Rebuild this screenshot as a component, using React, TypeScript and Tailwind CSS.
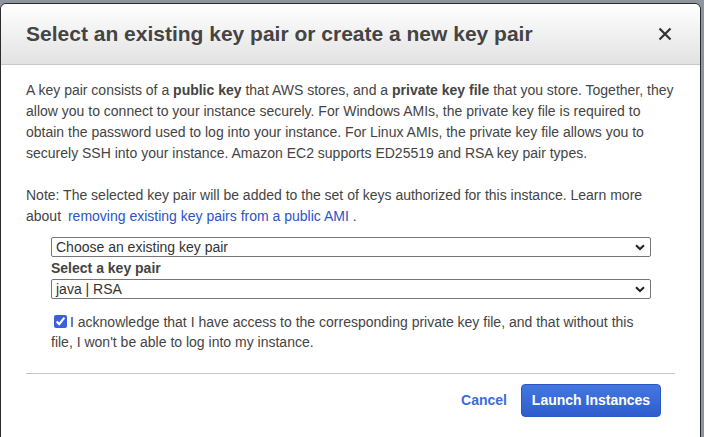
import React from "react";

function Chevron() {
  return (
    <svg width="10" height="7" viewBox="0 0 10 7" className="absolute right-[5px] top-[6px]">
      <path d="M1 1.2 L5 5 L9 1.2" fill="none" stroke="#222" strokeWidth="2" />
    </svg>
  );
}

function Select({ value }: { value: string }) {
  return (
    <div className="relative h-[20px] w-[600px] rounded-[2px] border border-[#767676] bg-white pl-[4px] text-[14px] leading-[18px] text-[#333]">
      {value}
      <Chevron />
    </div>
  );
}

export default function App() {
  return (
    <div
      className="h-[437px] w-[704px] overflow-hidden bg-[#8e959c] pt-[3px]"
      style={{ fontFamily: '"Liberation Sans", Arial, sans-serif' }}
    >
      <div className="h-[460px] w-[701px] rounded-t-[6px] border border-[#2b2b2b] bg-white">
        <div className="flex h-[61px] items-center justify-between rounded-t-[6px] border-b border-[#c8c8c8] bg-gradient-to-b from-[#ffffff] to-[#e2e2e2] pl-[25px] pr-[28px]">
          <div
            className="text-[21px] font-bold text-[#444]"
            style={{ fontFamily: '"Liberation Sans Narrow", "Arial Narrow", "Liberation Sans", sans-serif' }}
          >
            Select an existing key pair or create a new key pair
          </div>
          <svg width="14" height="14" viewBox="0 0 14 14">
            <path d="M1.5 1.5 L12.5 12.5 M12.5 1.5 L1.5 12.5" stroke="#333" strokeWidth="2.2" />
          </svg>
        </div>
        <div className="px-[25px] pt-[15px] text-[14px] leading-[21px] text-[#444]">
          <p>
            A key pair consists of a <b>public key</b> that AWS stores, and a <b>private key file</b> that you store. Together, they
            allow you to connect to your instance securely. For Windows AMIs, the private key file is required to obtain the
            password used to log into your instance. For Linux AMIs, the private key file allows you to securely SSH into your
            instance. Amazon EC2 supports ED25519 and RSA key pair types.
          </p>
          <p className="mt-[21px]">
            Note: The selected key pair will be added to the set of keys authorized for this instance. Learn more about{" "}
            <span className="ml-[3px] text-[#2d53c6]">removing existing key pairs from a public AMI</span> .
          </p>
          <div className="ml-[25px] mt-[10px] w-[600px]">
            <Select value="Choose an existing key pair" />
            <div className="mt-[1px] font-bold leading-[21px] text-[#444]">Select a key pair</div>
            <Select value="java | RSA" />
            <div className="mt-[13px] w-[590px] leading-[20px]">
              <input
                type="checkbox"
                defaultChecked
                className="mr-[3px] ml-[3px] h-[13px] w-[13px] align-[-1px] accent-[#3b5fe0]"
              />
              I acknowledge that I have access to the corresponding private key file, and that without this file, I won't be able
              to log into my instance.
            </div>
          </div>
          <div className="mt-[21px] border-t border-[#c6c6c6]" />
          <div className="flex items-center justify-end pr-[14px] pt-[10px]">
            <span className="mr-[14px] text-[14px] font-bold text-[#3c6be0]">Cancel</span>
            <button className="h-[33px] w-[140px] rounded-[4px] border border-[#2c56c4] bg-gradient-to-b from-[#4478e0] to-[#2f5ccd] text-[14px] font-bold text-white">
              Launch Instances
            </button>
          </div>
        </div>
      </div>
    </div>
  );
}
